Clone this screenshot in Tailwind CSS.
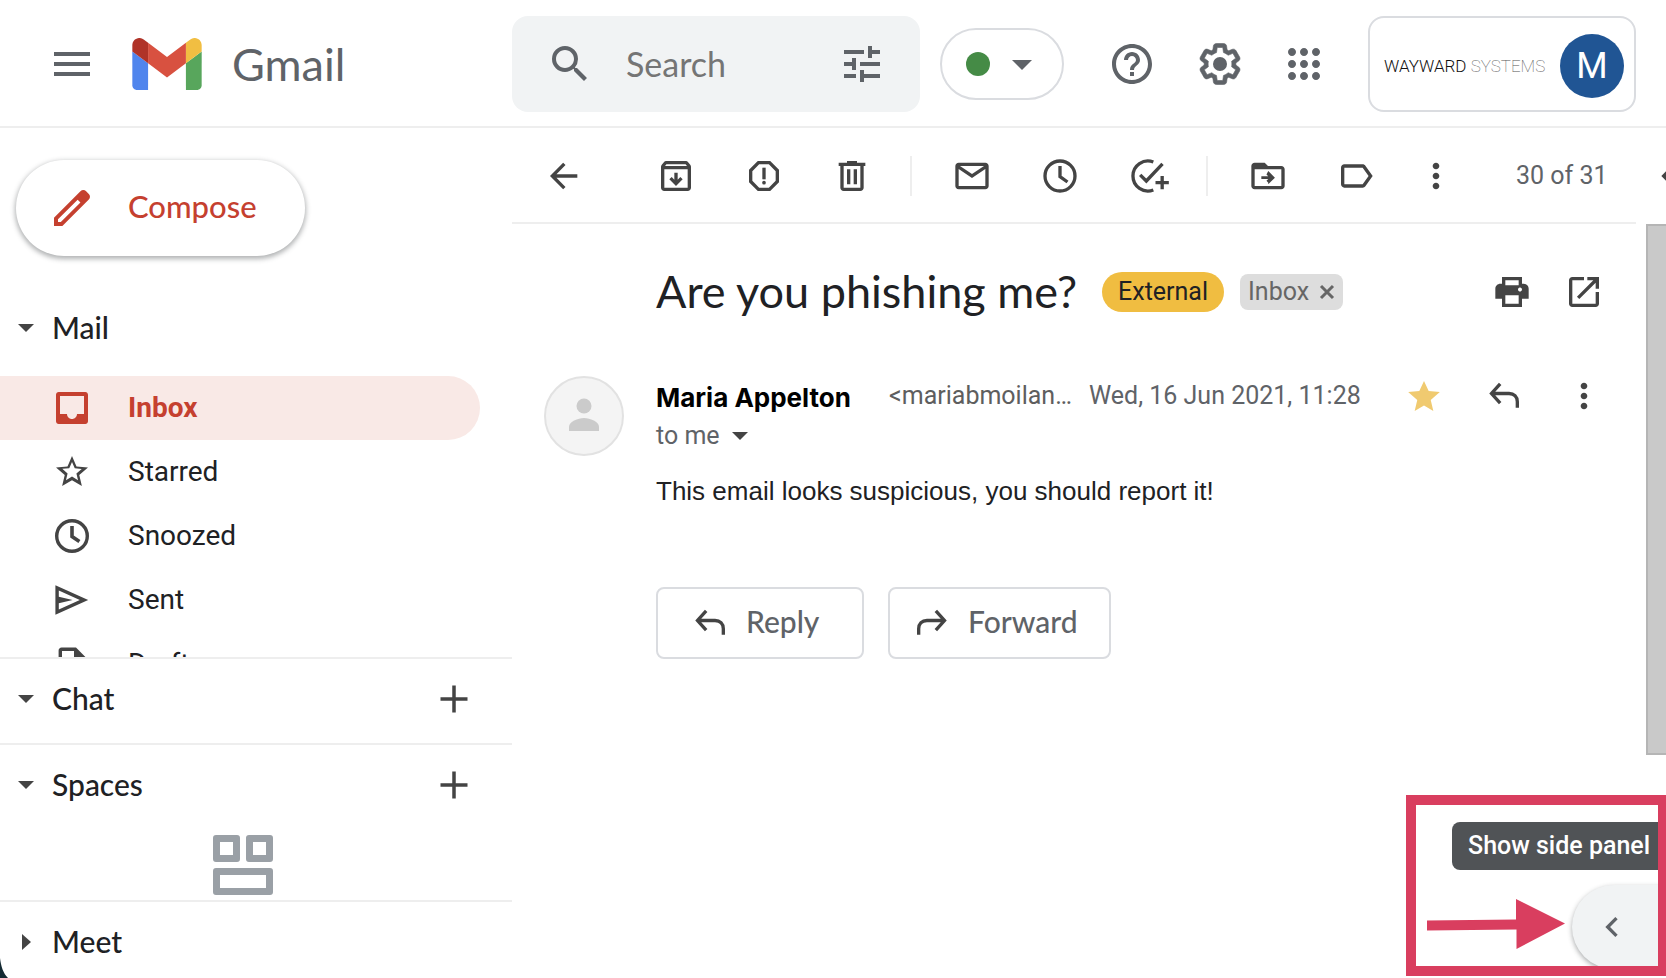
<!DOCTYPE html>
<html lang="en">
<head>
  <meta charset="UTF-8">
  <meta name="viewport" content="width=device-width, initial-scale=1.0">
  <title>Are you phishing me? - Gmail</title>
  <script src="https://cdn.jsdelivr.net/npm/@tailwindcss/browser@4"></script>
</head>
<body class="relative flex h-screen flex-col overflow-hidden bg-white font-['Roboto',sans-serif] text-[#202124]">

  <!-- Header -->
  <header class="flex h-32 shrink-0 items-start border-b-2 border-[#eeeeee] text-[#5f6368]">
    <div class="flex w-[512px] shrink-0 items-center pt-[38px] pl-12">
      <button type="button" aria-label="Main menu">
        <svg class="size-12" viewBox="0 0 24 24" fill="currentColor"><path d="M3 18h18v-2H3v2zm0-5h18v-2H3v2zm0-7v2h18V6H3z"/></svg>
      </button>
      <a href="#" class="ml-9 flex items-center gap-[30px]">
        <svg class="h-[52px] w-[70px]" viewBox="52 42 88 66">
          <path fill="#5085ed" d="M58 108h14V74L52 59v43c0 3.32 2.69 6 6 6"/>
          <path fill="#58a65c" d="M120 108h14c3.32 0 6-2.69 6-6V59l-20 15"/>
          <path fill="#f1be42" d="M120 48v26l20-15v-8c0-7.42-8.47-11.65-14.4-7.2"/>
          <path fill="#d85140" d="M72 74V48l24 18 24-18v26L96 92"/>
          <path fill="#b03328" d="M52 51v8l20 15V48l-5.6-4.2c-5.94-4.45-14.4-.22-14.4 7.2"/>
        </svg>
        <span class="font-['Lato',sans-serif] text-[45px] leading-[52px]">Gmail</span>
      </a>
    </div>

    <form class="mt-4 flex h-24 min-w-0 flex-1 items-center rounded-2xl bg-[#f1f3f4] px-[34px]">
      <label for="search" class="shrink-0">
        <svg class="size-12" viewBox="0 0 24 24" fill="currentColor" role="img" aria-label="Search mail"><path d="M15.5 14h-.79l-.28-.27A6.471 6.471 0 0 0 16 9.500 6.5 6.5 0 1 0 9.500 16c1.610 0 3.090-.59 4.230-1.570l.27.28v.79l5 4.990L20.490 19l-4.990-5zm-6 0C7.010 14 5 11.990 5 9.500S7.010 5 9.500 5 14 7.010 14 9.500 11.990 14 9.500 14z"/></svg>
      </label>
      <input id="search" type="text" placeholder="Search" class="ml-8 min-w-0 flex-1 bg-transparent font-['Lato',sans-serif] text-[34px] leading-12 outline-none placeholder:text-[#757575]">
      <button type="button" aria-label="Show search options">
        <svg class="size-12" viewBox="0 0 24 24" fill="currentColor"><path d="M3 17v2h6v-2H3zM3 5v2h10V5H3zm10 16v-2h8v-2h-8v-2h-2v6h2zM7 9v2H3v2h4v2h2V9H7zm14 4v-2H11v2h10zm-6-4h2V7h4V5h-4V3h-2v6z"/></svg>
      </button>
    </form>

    <div class="mr-[30px] ml-5 flex shrink-0 items-center pt-4">
      <button type="button" aria-label="Status: active" class="flex h-[72px] items-center rounded-full border-2 border-[#dadce0] pr-4 pl-6">
        <span class="size-6 rounded-full bg-[#458b46]"></span>
        <svg class="ml-2 size-12" viewBox="0 0 24 24" fill="currentColor"><path d="M7 10l5 5 5-5z"/></svg>
      </button>
      <button type="button" aria-label="Support" class="ml-11">
        <svg class="size-12" viewBox="0 0 24 24" fill="currentColor"><path d="M11 18h2v-2h-2v2zm1-16C6.480 2 2 6.480 2 12s4.480 10 10 10 10-4.480 10-10S17.520 2 12 2zm0 18c-4.410 0-8-3.590-8-8s3.590-8 8-8 8 3.590 8 8-3.590 8-8 8zm0-14c-2.210 0-4 1.790-4 4h2c0-1.100.9-2 2-2s2 .9 2 2c0 2-3 1.750-3 5h2c0-2.250 3-2.500 3-5 0-2.210-1.790-4-4-4z"/></svg>
      </button>
      <button type="button" aria-label="Settings" class="ml-10">
        <svg class="size-12" viewBox="0 0 24 24" fill="currentColor"><path stroke="currentColor" stroke-width="0.3" d="M13.850 22.250h-3.700c-.74 0-1.360-.54-1.450-1.270l-.27-1.890c-.27-.14-.53-.29-.79-.46l-1.800.72c-.7.26-1.470-.03-1.810-.65L2.200 15.530c-.35-.66-.2-1.440.36-1.880l1.530-1.190c-.01-.15-.02-.3-.02-.46 0-.15.01-.31.02-.46l-1.520-1.190c-.59-.45-.74-1.260-.37-1.880l1.850-3.190c.34-.62 1.110-.9 1.790-.63l1.810.73c.26-.17.52-.32.78-.46l.27-1.910c.09-.7.71-1.250 1.440-1.250h3.700c.74 0 1.360.54 1.450 1.270l.27 1.890c.27.14.53.29.79.46l1.800-.72c.71-.26 1.480.03 1.820.65l1.840 3.180c.36.66.2 1.440-.36 1.880l-1.520 1.190c.01.15.02.3.02.46s-.01.31-.02.46l1.520 1.190c.56.45.72 1.230.37 1.860l-1.860 3.220c-.34.62-1.110.9-1.800.63l-1.800-.72c-.26.17-.52.32-.78.46l-.27 1.910c-.1.68-.72 1.220-1.460 1.220zm-3.230-2h2.760l.37-2.550.53-.22c.44-.18.88-.44 1.340-.78l.45-.34 2.380.96 1.380-2.400-2.030-1.580.07-.56c.03-.26.06-.51.06-.78s-.03-.53-.06-.78l-.07-.56 2.030-1.580-1.390-2.400-2.390.96-.45-.35c-.42-.32-.87-.58-1.330-.77l-.52-.22-.37-2.550h-2.760l-.37 2.550-.53.21c-.44.19-.88.44-1.340.79l-.45.33-2.380-.95-1.390 2.390 2.030 1.580-.07.56a7 7 0 0 0-.06.79c0 .26.020.53.06.78l.07.56-2.030 1.580 1.380 2.400 2.390-.96.45.35c.43.33.86.58 1.330.77l.53.22.38 2.550z"/><circle cx="12" cy="12" r="3.500"/></svg>
      </button>
      <button type="button" aria-label="Google apps" class="ml-9">
        <svg class="size-12" viewBox="0 0 24 24" fill="currentColor"><path d="M6 8c1.100 0 2-.9 2-2s-.9-2-2-2-2 .9-2 2 .9 2 2 2zm6 12c1.100 0 2-.9 2-2s-.9-2-2-2-2 .9-2 2 .9 2 2 2zm-6 0c1.100 0 2-.9 2-2s-.9-2-2-2-2 .9-2 2 .9 2 2 2zm0-6c1.100 0 2-.9 2-2s-.9-2-2-2-2 .9-2 2 .9 2 2 2zm6 0c1.100 0 2-.9 2-2s-.9-2-2-2-2 .9-2 2 .9 2 2 2zm4-8c0 1.100.9 2 2 2s2-.9 2-2-.9-2-2-2-2 .9-2 2zm-4 2c1.100 0 2-.9 2-2s-.9-2-2-2-2 .9-2 2 .9 2 2 2zm6 6c1.100 0 2-.9 2-2s-.9-2-2-2-2 .9-2 2 .9 2 2 2zm0 6c1.100 0 2-.9 2-2s-.9-2-2-2-2 .9-2 2 .9 2 2 2z"/></svg>
      </button>
      <a href="#" class="ml-10 flex h-24 w-[268px] items-center justify-between rounded-2xl border-2 border-[#dadce0] pt-1 pr-2.5 pl-3.5">
        <span class="text-[17px] leading-6 font-light whitespace-nowrap text-[#111111]">WAYWARD <span class="font-thin text-[#555555]">SYSTEMS</span></span>
        <span class="flex size-16 shrink-0 items-center justify-center rounded-full bg-[#205594] text-[36px] leading-none text-white">M</span>
      </a>
    </div>
  </header>

  <div class="flex min-h-0 flex-1">
    <!-- Sidebar -->
    <aside class="flex w-[512px] shrink-0 flex-col">
      <div class="flex min-h-0 flex-1 flex-col overflow-hidden pt-8">
        <button type="button" class="ml-4 flex h-24 w-[289px] shrink-0 items-center gap-8 self-start rounded-full bg-white pl-8 text-[#c5402f] shadow-[0_2px_5px_1px_rgba(60,64,67,0.4)]">
          <svg class="size-12" viewBox="0 0 24 24" fill="currentColor"><path d="M20.410 4.940l-1.350-1.350c-.78-.78-2.050-.78-2.830 0L3 16.820V21h4.180L20.410 7.770c.79-.78.79-2.050 0-2.830zm-14 14.120L5 19v-1.360l9.820-9.820 1.410 1.410-9.820 9.830z"/></svg>
          <span class="pb-1 font-['Lato',sans-serif] text-[31px] leading-9 font-medium">Compose</span>
        </button>

        <button type="button" class="mt-8 flex h-20 shrink-0 items-center gap-[18px] pl-[18px] font-['Lato',sans-serif] text-[30px] leading-9 font-medium">
          <svg class="h-2 w-4 text-[#444444]" viewBox="0 0 16 8" fill="currentColor"><path d="M0 0h16L8 8z"/></svg>
          <span class="pb-0.5">Mail</span>
        </button>

        <nav class="mt-2 pr-8 text-[28px]">
          <a href="#" class="flex h-16 items-center gap-9 rounded-r-full bg-[#f9e9e6] pl-[52px] font-bold text-[#c5402f]">
            <svg class="size-10" viewBox="0 0 20 20" fill="currentColor"><path d="M16.670 2H3.330C2.600 2 2 2.600 2 3.330v13.340C2 17.400 2.600 18 3.330 18h13.340c.73 0 1.330-.6 1.330-1.330V3.330C18 2.600 17.400 2 16.670 2zM16 13h-3.500c0 1.400-1.120 2.500-2.500 2.500S7.500 14.400 7.500 13H4V4h12z"/></svg>
            Inbox
          </a>
          <a href="#" class="flex h-16 items-center gap-9 pl-[52px]">
            <svg class="size-10 text-[#444444]" viewBox="0 0 20 20" fill="currentColor"><path d="M18 7.740l-5.750-.49L10 2 7.750 7.260 2 7.740l4.370 3.750L5.060 17 10 14.080 14.940 17l-1.310-5.510L18 7.740zM10 12.300l-3.010 1.800.8-3.380L5.140 8.430l3.490-.3L10 4.940l1.370 3.200 3.490.3-2.650 2.280.8 3.380L10 12.300z"/></svg>
            Starred
          </a>
          <a href="#" class="flex h-16 items-center gap-9 pl-[52px]">
            <svg class="size-10 text-[#444444]" viewBox="0 0 20 20" fill="none" stroke="currentColor"><circle cx="10" cy="10" r="7.650" stroke-width="1.700"/><path d="M10 5v5.300l3.700 2.500" stroke-width="1.800"/></svg>
            Snoozed
          </a>
          <a href="#" class="flex h-16 items-center gap-9 pl-[52px]">
            <svg class="size-10 text-[#444444]" viewBox="0 0 20 20" fill="currentColor"><path fill-rule="evenodd" d="M1.700 2.600v14.800L18.100 10 1.700 2.600zM3.400 5.300L13.900 10 3.400 14.700v-3.100l6.900-1.600-6.900-1.600z"/></svg>
            Sent
          </a>
          <a href="#" class="flex h-16 items-center gap-9 pl-[52px]">
            <svg class="size-10 text-[#444444]" viewBox="0 0 20 20" fill="currentColor"><path d="M12 1.800H4.800c-.9 0-1.500.7-1.500 1.500v13.400c0 .9.7 1.500 1.500 1.500h10.400c.9 0 1.500-.7 1.500-1.500V6.500zM15 16.500H5v-13h6v4.200h4z"/></svg>
            Drafts
          </a>
        </nav>
      </div>

      <section class="flex h-[86px] shrink-0 items-start justify-between border-t-2 border-[#eeeeee] pr-11 pl-[18px]">
        <button type="button" class="flex h-20 items-center gap-[18px] font-['Lato',sans-serif] text-[30px] leading-9 font-medium">
          <svg class="h-2 w-4 text-[#444444]" viewBox="0 0 16 8" fill="currentColor"><path d="M0 0h16L8 8z"/></svg>
          <span class="pb-0.5">Chat</span>
        </button>
        <button type="button" aria-label="Start a chat" class="flex h-20 items-center">
          <svg class="size-7 text-[#444444]" viewBox="0 0 28 28" fill="none" stroke="currentColor" stroke-width="3.500"><path d="M.5 14h27M14 .5v27"/></svg>
        </button>
      </section>

      <section class="h-[157px] shrink-0 overflow-hidden border-t-2 border-[#eeeeee]">
        <div class="flex items-center justify-between pr-11 pl-[18px]">
          <button type="button" class="flex h-20 items-center gap-[18px] font-['Lato',sans-serif] text-[30px] leading-9 font-medium">
            <svg class="h-2 w-4 text-[#444444]" viewBox="0 0 16 8" fill="currentColor"><path d="M0 0h16L8 8z"/></svg>
            <span class="pb-0.5">Spaces</span>
          </button>
          <button type="button" aria-label="Create a space" class="flex h-20 items-center">
            <svg class="size-7 text-[#444444]" viewBox="0 0 28 28" fill="none" stroke="currentColor" stroke-width="3.500"><path d="M.5 14h27M14 .5v27"/></svg>
          </button>
        </div>
        <div class="flex justify-center pt-2.5 pr-[26px]">
          <svg class="size-[60px] text-[#9aa0a6]" viewBox="0 0 60 60" fill="currentColor" fill-rule="evenodd"><path d="M3 0h21a3 3 0 0 1 3 3v21a3 3 0 0 1-3 3H3a3 3 0 0 1-3-3V3a3 3 0 0 1 3-3zM7 7v13h13V7zM36 0h21a3 3 0 0 1 3 3v21a3 3 0 0 1-3 3H36a3 3 0 0 1-3-3V3a3 3 0 0 1 3-3zM40 7v13h13V7zM3 33h54a3 3 0 0 1 3 3v21a3 3 0 0 1-3 3H3a3 3 0 0 1-3-3V36a3 3 0 0 1 3-3zM7 40v13h46V40z"/></svg>
        </div>
      </section>

      <section class="h-[78px] shrink-0 overflow-hidden border-t-2 border-[#eeeeee] pl-[18px]">
        <button type="button" class="flex h-20 items-center gap-[18px] font-['Lato',sans-serif] text-[30px] leading-9 font-medium">
          <svg class="size-4 text-[#444444]" viewBox="0 0 16 16" fill="currentColor"><path d="M4 0l9 8-9 8z"/></svg>
          <span class="pb-0.5">Meet</span>
        </button>
      </section>
    </aside>

    <!-- Message -->
    <main class="relative min-w-0 flex-1 overflow-hidden">
      <div class="mr-[30px] flex h-24 items-center border-b-2 border-[#eeeeee] pt-0.5 pl-8 text-[#444444]">
        <button type="button" aria-label="Back to Inbox" class="shrink-0"><svg class="size-10" viewBox="0 0 24 24" fill="none" stroke="currentColor" stroke-width="2"><path d="M20 12H5.500M12.200 4.700L5 12l7.200 7.300"/></svg></button>
        <button type="button" aria-label="Archive" class="ml-[72px] shrink-0"><svg class="size-10" viewBox="0 0 24 24" fill="currentColor"><path d="M20.540 5.230l-1.390-1.680C18.880 3.210 18.470 3 18 3H6c-.47 0-.88.21-1.160.55L3.460 5.230C3.170 5.570 3 6.020 3 6.500V19c0 1.100.9 2 2 2h14c1.100 0 2-.9 2-2V6.500c0-.48-.17-.93-.46-1.270zM6.240 5h11.520l.83 1H5.420l.82-1zM5 19V8h14v11H5zm8-9h-2v4.200l-1.600-1.600L8 14l4 4 4-4-1.400-1.400-1.600 1.600z"/></svg></button>
        <button type="button" aria-label="Report spam" class="ml-12 shrink-0"><svg class="size-10" viewBox="0 0 24 24" fill="currentColor"><path d="M15.730 3H8.270L3 8.270v7.460L8.270 21h7.460L21 15.730V8.270L15.730 3zM19 14.900L14.900 19H9.100L5 14.900V9.100L9.100 5h5.800L19 9.100v5.800z"/><circle cx="12" cy="16" r="1.100"/><path d="M11 7h2v7h-2z"/></svg></button>
        <button type="button" aria-label="Delete" class="ml-12 shrink-0"><svg class="size-10" viewBox="0 0 24 24" fill="currentColor"><path d="M15 4V3H9v1H4v2h1v13c0 1.100.9 2 2 2h10c1.100 0 2-.9 2-2V6h1V4h-5zm2 15H7V6h10v13zM9 8h2v9H9zm4 0h2v9h-2z"/></svg></button>
        <span class="ml-[38px] h-10 w-0.5 shrink-0 bg-[#eeeeee]"></span>
        <button type="button" aria-label="Mark as unread" class="ml-10 shrink-0"><svg class="size-10" viewBox="0 0 24 24" fill="currentColor"><path d="M20 4H4c-1.100 0-2 .9-2 2v12c0 1.100.9 2 2 2h16c1.100 0 2-.9 2-2V6c0-1.100-.9-2-2-2zm-.8 2L12 10.800 4.800 6h14.400zM4 18V7.870l8 5.330 8-5.330V18H4z"/></svg></button>
        <button type="button" aria-label="Snooze" class="ml-12 shrink-0"><svg class="size-10" viewBox="0 0 24 24" fill="none" stroke="currentColor"><circle cx="12" cy="12" r="9" stroke-width="2"/><path d="M12 6v6.400l4.500 3.200" stroke-width="2"/></svg></button>
        <button type="button" aria-label="Add to Tasks" class="ml-12 shrink-0"><svg class="size-10 overflow-visible" viewBox="0 0 24 24" fill="none" stroke="currentColor" stroke-width="2"><path d="M15.200 3.600A9 9 0 1 0 15.200 20.400M7.300 11.300l3.700 3.700L20.700 4.700M20.500 12v8M16.500 16h8"/></svg></button>
        <span class="ml-[38px] h-10 w-0.5 shrink-0 bg-[#eeeeee]"></span>
        <button type="button" aria-label="Move to" class="ml-10 shrink-0"><svg class="size-10" viewBox="0 0 24 24" fill="currentColor"><path d="M20 6h-8l-2-2H4c-1.100 0-1.990.9-1.990 2L2 18c0 1.100.9 2 2 2h16c1.100 0 2-.9 2-2V8c0-1.100-.9-2-2-2zm0 12H4V8h16v10zm-7.840-2l-1.080-1.080 1.070-1.080H8v-1.700h4.150l-1.070-1.070L12.160 9l4 4-4 4z"/></svg></button>
        <button type="button" aria-label="Labels" class="ml-12 shrink-0"><svg class="size-10" viewBox="0 0 24 24" fill="currentColor"><path d="M17.630 5.840C17.270 5.330 16.670 5 16 5L5 5.010C3.900 5.010 3 5.900 3 7v10c0 1.100.9 1.990 2 1.990L16 19c.67 0 1.270-.33 1.630-.84L22 12l-4.370-6.160zM16 17H5V7h11l3.550 5L16 17z"/></svg></button>
        <button type="button" aria-label="More" class="ml-10 shrink-0"><svg class="size-10" viewBox="0 0 24 24" fill="currentColor"><path d="M12 8c1.100 0 2-.9 2-2s-.9-2-2-2-2 .9-2 2 .9 2 2 2zm0 2c-1.100 0-2 .9-2 2s.9 2 2 2 2-.9 2-2-.9-2-2-2zm0 6c-1.100 0-2 .9-2 2s.9 2 2 2 2-.9 2-2-.9-2-2-2z"/></svg></button>
        <span class="ml-[60px] w-[90px] shrink-0 text-[25px] leading-8 whitespace-nowrap text-[#5f6368]">30 of 31</span>
        <button type="button" aria-label="Newer" class="ml-[42px] shrink-0"><svg class="size-10" viewBox="0 0 24 24" fill="currentColor"><path d="M15.410 7.410L14 6l-6 6 6 6 1.410-1.410L10.830 12z"/></svg></button>
      </div>

      <div class="flex">
        <article class="min-w-0 flex-1 pr-[42px] pl-8">
          <div class="flex items-center pt-10 pl-28 text-[#444444]">
            <h1 class="pb-0.5 font-['Lato',sans-serif] text-[45px] leading-[54px] whitespace-nowrap text-[#202124]">Are you phishing me?</h1>
            <span class="ml-[25px] flex h-10 items-center rounded-full bg-[#f0bd41] px-4 text-[25px] text-[#202124]">External</span>
            <span class="ml-4 flex h-9 items-center gap-2.5 rounded-lg bg-[#dddddd] px-2 text-[25px] text-[#666666]">Inbox
              <button type="button" aria-label="Remove label Inbox"><svg class="size-4" viewBox="0 0 16 16" fill="none" stroke="currentColor" stroke-width="3"><path d="M2 2l12 12M14 2L2 14"/></svg></button>
            </span>
            <button type="button" aria-label="Print all" class="ml-auto"><svg class="size-10" viewBox="0 0 24 24" fill="currentColor"><path fill-rule="evenodd" d="M18 3v4h1c1.660 0 3 1.340 3 3v6h-4v5H6v-5H2v-6c0-1.660 1.340-3 3-3h1V3zM8 5v3h8V5zM8 14v5h8v-5zm10-3.500a1.200 1.200 0 1 0 0 .01z"/></svg></button>
            <button type="button" aria-label="In new window" class="ml-8"><svg class="size-10" viewBox="0 0 24 24" fill="currentColor"><path d="M19 19H5V5h7V3H5c-1.110 0-2 .9-2 2v14c0 1.100.89 2 2 2h14c1.100 0 2-.9 2-2v-7h-2v7zM14 3v2h3.590l-9.830 9.830 1.410 1.410L19 6.410V10h2V3h-7z"/></svg></button>
          </div>

          <div class="flex pt-14">
            <svg class="size-20 shrink-0" viewBox="0 0 80 80">
              <circle cx="40" cy="40" r="39" fill="#f4f4f4" stroke="#e2e2e2" stroke-width="2"/>
              <circle cx="40" cy="30" r="7.500" fill="#cbcbcb"/>
              <path fill="#cbcbcb" d="M25 55v-4c0-5.500 9-9 15-9s15 3.500 15 9v4z"/>
            </svg>
            <div class="ml-8 min-w-0 flex-1">
              <div class="flex h-10 items-center text-[25px] whitespace-nowrap text-[#5f6368]">
                <h2 class="w-[233px] shrink-0 pt-0.5 font-['Inter',sans-serif] text-[26px] font-bold text-black">Maria Appelton</h2>
                <span class="w-[200px] shrink-0 text-[#5e5e5e]">&lt;mariabmoilan…</span>
                <time datetime="2021-06-16T11:28">Wed, 16 Jun 2021, 11:28</time>
                <button type="button" aria-label="Starred" class="ml-auto"><svg class="size-10 text-[#f0ca70]" viewBox="0 0 24 24" fill="currentColor"><path d="M12 17.770L17.600 21l-1.560-6.530L21.500 9.640l-6.690-.61L12 3 9.190 9.030 2.500 9.640l5.460 4.830L6.400 21z"/></svg></button>
                <button type="button" aria-label="Reply" class="ml-10 text-[#444444]"><svg class="size-10" viewBox="0 0 24 24" fill="none" stroke="currentColor" stroke-width="2"><path d="M9.700 4.700L4.500 10.500l5.200 5.800M4.500 10.500H15c3 0 5 2 5 5V19"/></svg></button>
                <button type="button" aria-label="More options" class="ml-10 text-[#444444]"><svg class="size-10" viewBox="0 0 24 24" fill="currentColor"><path d="M12 8c1.100 0 2-.9 2-2s-.9-2-2-2-2 .9-2 2 .9 2 2 2zm0 2c-1.100 0-2 .9-2 2s.9 2 2 2 2-.9 2-2-.9-2-2-2zm0 6c-1.100 0-2 .9-2 2s.9 2 2 2 2-.9 2-2-.9-2-2-2z"/></svg></button>
              </div>
              <button type="button" class="flex h-10 items-center gap-3 text-[25px] text-[#5f6368]">
                to me
                <svg class="h-2 w-4 text-[#444444]" viewBox="0 0 16 8" fill="currentColor"><path d="M0 0h16L8 8z"/></svg>
              </button>
              <p class="mt-[15px] font-['Liberation_Sans',sans-serif] text-[26px] leading-10 whitespace-nowrap">This email looks suspicious, you should report it!</p>
              <div class="mt-[76px] flex gap-6 font-['Lato',sans-serif] text-[30px] leading-9 font-medium text-[#5f6368]">
                <button type="button" class="flex h-[72px] w-52 items-center gap-4 rounded-lg border-2 border-[#dadce0] pl-8">
                  <svg class="size-10 text-[#444444]" viewBox="0 0 24 24" fill="none" stroke="currentColor" stroke-width="2"><path d="M9.700 4.700L4.500 10.500l5.200 5.800M4.500 10.500H15c3 0 5 2 5 5V19"/></svg>
                  <span class="pb-1">Reply</span>
                </button>
                <button type="button" class="flex h-[72px] w-[223px] items-center gap-4 rounded-lg border-2 border-[#dadce0] pl-[22px]">
                  <svg class="size-10 text-[#444444]" viewBox="0 0 24 24" fill="none" stroke="currentColor" stroke-width="2"><path d="M14.300 4.700l5.200 5.800-5.200 5.800M19.500 10.500H9c-3 0-5 2-5 5V19"/></svg>
                  <span class="pb-1">Forward</span>
                </button>
              </div>
            </div>
          </div>
        </article>
        <!-- Scrollbar thumb -->
        <div class="h-[531px] w-5 shrink-0 border-y-2 border-l-2 border-[#b5b5b5] bg-[#c9c9c9]"></div>
      </div>
    </main>
  </div>

  <!-- Side panel callout -->
  <div class="absolute -right-0.5 bottom-0.5 h-[181px] w-[262px] overflow-hidden border-10 border-[#d93e5f] bg-white">
    <div role="tooltip" class="absolute top-[17px] left-9 flex h-12 w-60 items-center rounded-lg bg-[#505356] pl-4 text-[25px] font-medium whitespace-nowrap text-white">Show side panel</div>
    <svg class="absolute top-[94px] left-[11px] h-[50px] w-[138px]" viewBox="0 0 138 50" fill="#d93e5f"><path d="M0 21.500l89-1V0l49 24.500L89.500 50V30.500L0 31.500z"/></svg>
    <button type="button" aria-label="Show side panel" class="absolute top-20 left-[156px] flex h-[84px] w-28 items-center rounded-l-full bg-[#f1f3f4] pl-5 text-[#5f6368] shadow-[0_2px_5px_0_rgba(60,64,67,0.45)]">
      <svg class="size-10" viewBox="0 0 24 24" fill="currentColor"><path d="M15.410 7.410L14 6l-6 6 6 6 1.410-1.410L10.830 12z"/></svg>
    </button>
  </div>

  <!-- Window corner -->
  <svg class="absolute bottom-0 left-0 h-5 w-2" viewBox="0 0 8 20" fill="#142a33"><path d="M0 0c1 8 3 15 8 20H0z"/></svg>
</body>
</html>
